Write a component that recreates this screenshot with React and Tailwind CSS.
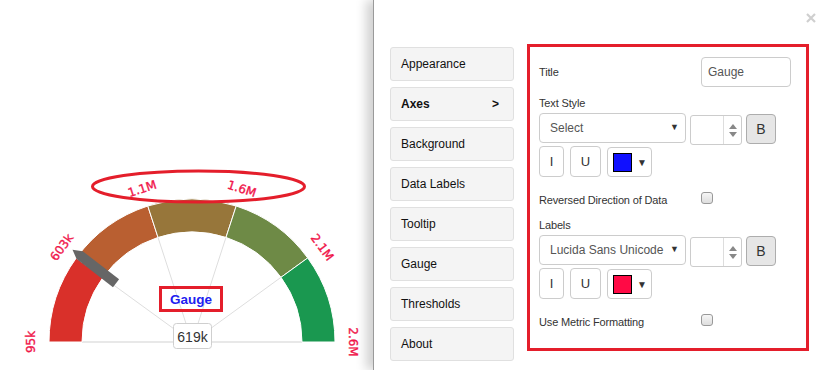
import React from "react";

const cx = 192, cy = 342, R = 143, r = 110;
const rad = (a) => (a * Math.PI) / 180;
const pt = (a, d) => [cx + d * Math.cos(rad(a)), cy - d * Math.sin(rad(a))];

function segPath(a1, a2) {
  const [x1, y1] = pt(a1, R);
  const [x2, y2] = pt(a2, R);
  const [x3, y3] = pt(a2, r);
  const [x4, y4] = pt(a1, r);
  return `M${x1} ${y1} A${R} ${R} 0 0 1 ${x2} ${y2} L${x3} ${y3} A${r} ${r} 0 0 0 ${x4} ${y4} Z`;
}

const segs = [
  [180, 144, "#d9302a"],
  [144, 108, "#b95f31"],
  [108, 72, "#97763a"],
  [72, 36, "#6e8a46"],
  [36, 0, "#1a9850"],
];

const labels = [
  [180, "95k"],
  [144, "603k"],
  [108, "1.1M"],
  [72, "1.6M"],
  [36, "2.1M"],
  [0, "2.6M"],
];

function Needle() {
  const a = 142.3;
  const u = [Math.cos(rad(a)), -Math.sin(rad(a))];
  const v = [Math.sin(rad(a)), Math.cos(rad(a))];
  const p = (d, w) => [cx + d * u[0] + w * v[0], cy + d * u[1] + w * v[1]];
  const pts = [p(96, 5), p(142, 5), p(151, 0), p(142, -5), p(96, -5)];
  return <polygon points={pts.map((q) => q.join(",")).join(" ")} fill="#666" />;
}

function Gauge() {
  return (
    <svg width="373" height="370" viewBox="0 0 373 370">
      <line x1={cx - r} y1={cy} x2={cx + r} y2={cy} stroke="#e8e8e8" strokeWidth="2" />
      {[144, 108, 72, 36].map((a) => {
        const [x, y] = pt(a, r);
        return <line key={a} x1={cx} y1={cy} x2={x} y2={y} stroke="#dedede" strokeWidth="1" />;
      })}
      {segs.map(([a1, a2, c]) => (
        <path key={a1} d={segPath(a1, a2)} fill={c} stroke="#ffffff" strokeWidth="1" />
      ))}
      <Needle />
      {labels.map(([a, t]) => {
        const [x, y] = pt(a, 161);
        return (
          <text
            key={t}
            x={x}
            y={y}
            textAnchor="middle"
            dominantBaseline="central"
            transform={`rotate(${90 - a} ${x} ${y})`}
            fill="#f0154a"
            stroke="#f0154a"
            strokeWidth="0.35"
            fontSize="12"
            fontFamily="'DejaVu Sans', sans-serif"
          >
            {t}
          </text>
        );
      })}
      <ellipse cx="198.5" cy="186.5" rx="106" ry="15.5" fill="none" stroke="#e41e2b" strokeWidth="3" />
      <text
        x="191"
        y="299"
        textAnchor="middle"
        dominantBaseline="central"
        fill="#2020f0"
        fontSize="13.5"
        fontWeight="bold"
        fontFamily="'Liberation Sans', Arial, sans-serif"
      >
        Gauge
      </text>
      <rect x="160.5" y="287.5" width="61" height="23" fill="none" stroke="#e41e2b" strokeWidth="3" />
      <rect x="173.5" y="323.5" width="38" height="25" rx="3" fill="#fff" stroke="#cfcfcf" />
      <text
        x="192.5"
        y="336.5"
        textAnchor="middle"
        dominantBaseline="central"
        fill="#333"
        fontSize="14"
        fontFamily="'Liberation Sans', Arial, sans-serif"
      >
        619k
      </text>
    </svg>
  );
}

const menu = ["Appearance", "Axes", "Background", "Data Labels", "Tooltip", "Gauge", "Thresholds", "About"];

function SelectRow({ value }) {
  return (
    <div className="flex items-start h-[31px]">
      <div className="w-[147px] h-[30px] border border-[#cccccc] rounded-[4px] bg-white flex items-center justify-between pl-[10px] pr-[6px] text-[12px] text-[#555]">
        <span>{value}</span>
        <span className="text-[9px] text-[#333]">▼</span>
      </div>
      <div className="ml-[4px] mt-[2px] w-[52px] h-[30px] border border-[#cccccc] rounded-[3px] bg-white flex">
        <div className="flex-1" />
        <div className="w-[18px] border-l border-[#dddddd] flex flex-col items-center justify-center gap-[3px]">
          <svg width="8" height="5" viewBox="0 0 8 5"><path d="M0 5 L4 0 L8 5 Z" fill="#888" /></svg>
          <svg width="8" height="5" viewBox="0 0 8 5"><path d="M0 0 L4 5 L8 0 Z" fill="#888" /></svg>
        </div>
      </div>
      <div className="ml-[4px] mt-[1px] w-[30px] h-[30px] bg-[#e6e6e6] border border-[#adadad] rounded-[4px] flex items-center justify-center text-[14px] text-[#333]">
        B
      </div>
    </div>
  );
}

function StyleRow({ color }) {
  return (
    <div className="flex items-start h-[31px] mt-[2px]">
      <div className="w-[25px] h-[31px] border border-[#cccccc] rounded-[4px] bg-white flex items-center justify-center text-[13px] text-[#333]">
        I
      </div>
      <div className="ml-[6px] w-[31px] h-[31px] border border-[#cccccc] rounded-[4px] bg-white flex items-center justify-center text-[13px] text-[#333]">
        U
      </div>
      <div className="ml-[6px] w-[45px] h-[30px] mt-[1px] border border-[#cccccc] rounded-[4px] bg-white flex items-center pl-[5px]">
        <div className={`w-[19px] h-[19px] border border-black ${color}`} />
        <span className="ml-[5px] text-[10px] text-[#333]">▼</span>
      </div>
    </div>
  );
}

function Checkbox() {
  return <div className="w-[12px] h-[12px] rounded-[3px] border border-[#999] bg-gradient-to-b from-[#f6f6f6] to-[#dedede]" />;
}

export default function App() {
  return (
    <div className="w-[824px] h-[370px] flex bg-white overflow-hidden" style={{ fontFamily: "'Liberation Sans', Arial, sans-serif" }}>
      <div className="w-[373px] shrink-0">
        <Gauge />
      </div>
      <div className="relative flex-1 bg-white border-l border-[#9a9a9a] shadow-[-7px_0_10px_rgba(0,0,0,0.18)] flex items-start pl-[16px] pt-[44px]">
        <div className="absolute right-[8px] top-[13px]">
          <svg width="10" height="10" viewBox="0 0 10 10">
            <path d="M1 1 L9 9 M9 1 L1 9" stroke="#cfcfcf" strokeWidth="2.2" />
          </svg>
        </div>
        <div className="w-[124px] mt-[3px] flex flex-col gap-[6px]">
          {menu.map((m) => (
            <div
              key={m}
              className="h-[34px] bg-[#f4f4f4] border border-[#e0e0e0] rounded-[3px] flex items-center justify-between pl-[10px] pr-[14px] text-[12px] text-[#111]"
            >
              <span className={m === "Axes" ? "font-bold" : ""}>{m}</span>
              {m === "Axes" && <span className="font-bold">&gt;</span>}
            </div>
          ))}
        </div>
        <div className="ml-[13px] w-[282px] h-[307px] border-[3px] border-[#e41e2b] pl-[9px] pt-[10px] text-[11px] tracking-[-0.15px] text-[#333]">
          <div className="flex items-center h-[30px]">
            <div className="w-[162px]">Title</div>
            <div className="w-[90px] h-[30px] border border-[#cccccc] rounded-[4px] flex items-center pl-[6px] text-[12px] tracking-normal text-[#555]">
              Gauge
            </div>
          </div>
          <div className="mt-[9px] leading-[14px] mb-[3px]">Text Style</div>
          <div className="tracking-normal">
            <SelectRow value="Select" />
            <StyleRow color="bg-[#1010ff]" />
          </div>
          <div className="mt-[16px] flex items-start h-[14px] leading-[14px]">
            <div className="w-[162px]">Reversed Direction of Data</div>
            <div className="-mt-[1px]"><Checkbox /></div>
          </div>
          <div className="mt-[11px] leading-[14px] mb-[3px]">Labels</div>
          <div className="tracking-normal">
            <SelectRow value="Lucida Sans Unicode" />
            <StyleRow color="bg-[#ff0a45]" />
          </div>
          <div className="mt-[16px] flex items-start h-[14px] leading-[14px]">
            <div className="w-[162px]">Use Metric Formatting</div>
            <div className="-mt-[1px]"><Checkbox /></div>
          </div>
        </div>
      </div>
    </div>
  );
}
